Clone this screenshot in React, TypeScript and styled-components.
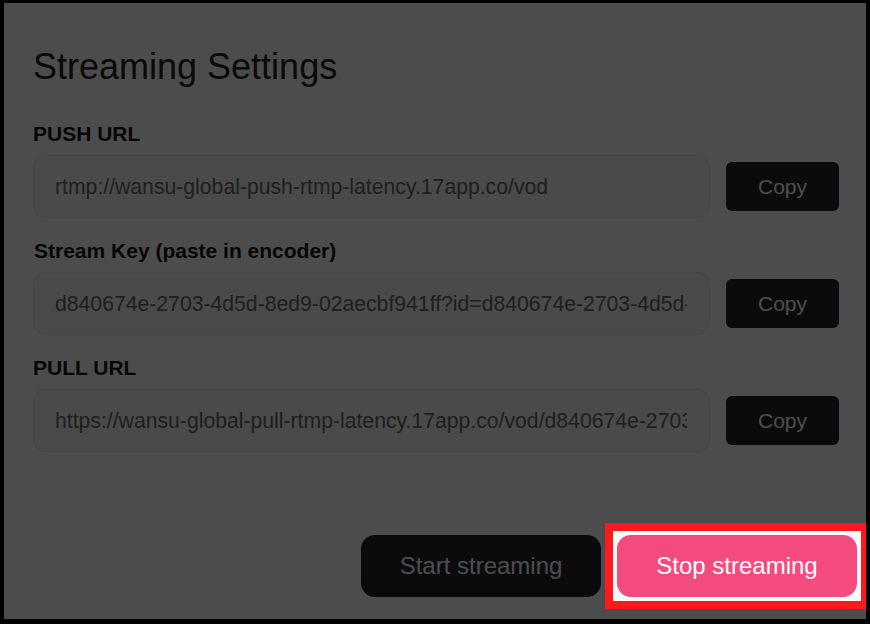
import React from 'react';
import styled, { createGlobalStyle } from 'styled-components';

const GlobalStyle = createGlobalStyle`
    html, body {
        margin: 0;
        padding: 0;
        background: #000;
    }
    body {
        font-family: "Liberation Sans", Arial, sans-serif;
    }
`;

const fields = [
    { label: 'PUSH URL', value: 'rtmp://wansu-global-push-rtmp-latency.17app.co/vod', indent: 0 },
    {
        label: 'Stream Key (paste in encoder)',
        value: 'd840674e-2703-4d5d-8ed9-02aecbf941ff?id=d840674e-2703-4d5d-8ed9-02aecbf941ff',
        indent: 1,
    },
    {
        label: 'PULL URL',
        value: 'https://wansu-global-pull-rtmp-latency.17app.co/vod/d840674e-2703-4d5d-8ed9-02aecbf941ff',
        indent: 0,
    },
];

const App = () => {
    return (
        <>
            <GlobalStyle />
            <Frame>
                <Body>
                    <Title>Streaming Settings</Title>
                    {fields.map((f) => (
                        <Field key={f.label}>
                            <Label indent={f.indent}>{f.label}</Label>
                            <Row>
                                <ValueInput readOnly value={f.value} />
                                <CopyButton>Copy</CopyButton>
                            </Row>
                        </Field>
                    ))}
                </Body>
                <Footer>
                    <BigButton>Start streaming</BigButton>
                    <Spotlight>
                        <BigButton primary>Stop streaming</BigButton>
                    </Spotlight>
                </Footer>
                <Overlay />
            </Frame>
        </>
    );
};

export default App;

const Frame = styled.div`
    position: relative;
    box-sizing: border-box;
    width: 870px;
    height: 624px;
    border-style: solid;
    border-color: #000;
    border-width: 3px 4px 5px 4px;
    background: #fff;
    overflow: hidden;
`;

const Overlay = styled.div`
    position: absolute;
    inset: 0;
    background: rgba(0, 0, 0, 0.7);
    z-index: 1;
`;

const Body = styled.div`
    padding: 44px 27px 0 29px;
`;

const Title = styled.h1`
    margin: 0 0 35px;
    font-size: 36px;
    line-height: 40px;
    font-weight: 400;
    color: #222;
`;

const Field = styled.div`
    margin-bottom: 21px;
    &:last-child {
        margin-bottom: 0;
    }
`;

const Label = styled.div<{ indent: number }>`
    margin: 0 0 9px ${(p) => p.indent}px;
    font-size: 21px;
    line-height: 24px;
    font-weight: 700;
    color: #141414;
`;

const Row = styled.div`
    display: flex;
    align-items: center;
    gap: 16px;
`;

const ValueInput = styled.input`
    flex: 1;
    min-width: 0;
    box-sizing: border-box;
    height: 63px;
    padding: 0 22px 0 21px;
    border: 1px solid #e8e8e8;
    border-radius: 12px;
    background: #f7f7f7;
    font-family: "Liberation Sans", Arial, sans-serif;
    font-size: 21.2px;
    color: #6a6a6a;
    outline: none;
`;

const CopyButton = styled.button`
    flex: none;
    width: 113px;
    height: 49px;
    border: none;
    border-radius: 6px;
    background: #25252d;
    color: #fff;
    font-family: "Liberation Sans", Arial, sans-serif;
    font-size: 21px;
    cursor: pointer;
`;

const Footer = styled.div`
    display: flex;
    justify-content: flex-end;
    align-items: center;
    gap: 12px;
    padding: 79px 5px 0 0;
`;

const Spotlight = styled.div`
    position: relative;
    z-index: 2;
    display: flex;
    padding: 4px;
    background: #fafafa;
    box-shadow: 0 0 0 8px #fe1a1c;
`;

const BigButton = styled.button<{ primary?: boolean }>`
    width: 240px;
    height: 62px;
    border: none;
    border-radius: 14px;
    background: ${(p) => (p.primary ? '#f44b7e' : '#25252d')};
    color: #fff;
    font-family: "Liberation Sans", Arial, sans-serif;
    font-size: 24px;
    cursor: pointer;
`;
